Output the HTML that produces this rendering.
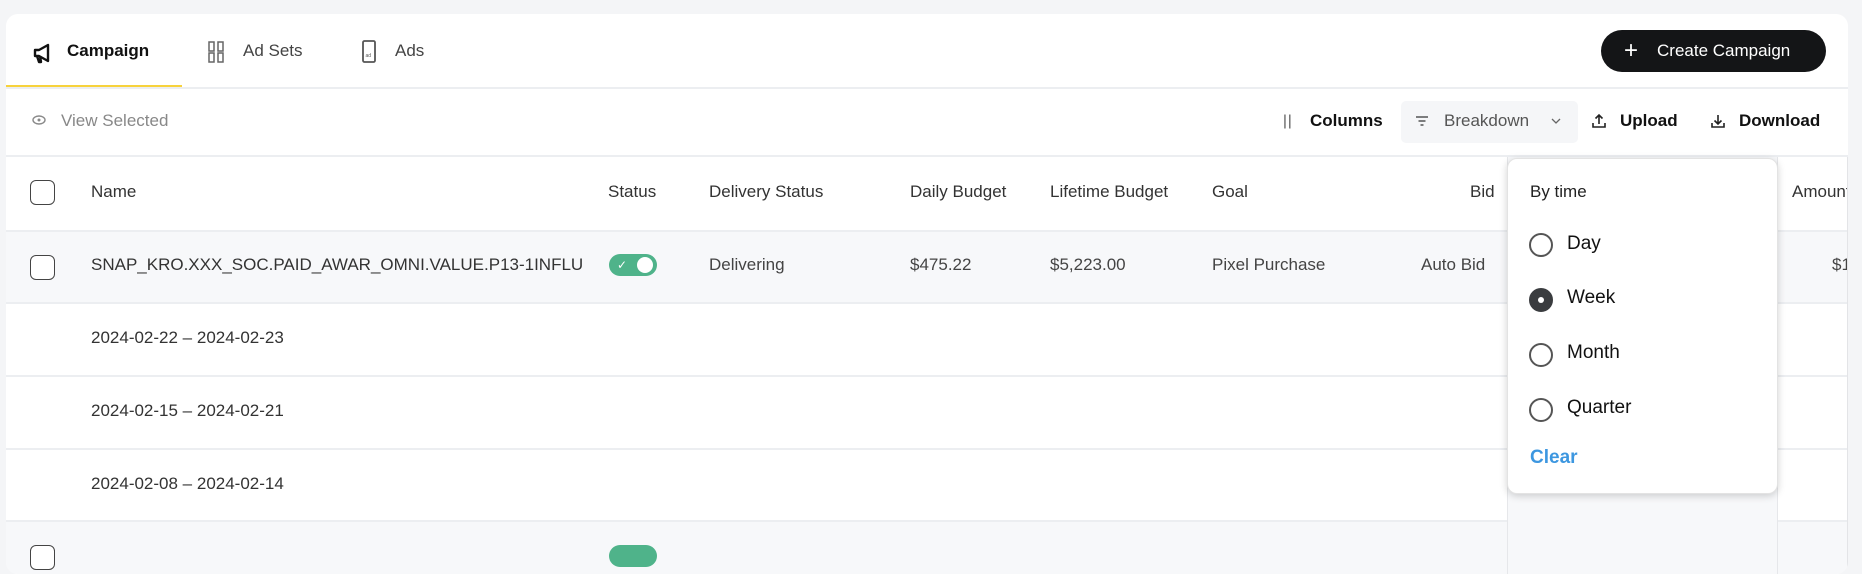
<!DOCTYPE html>
<html><head><style>
*{box-sizing:border-box;margin:0;padding:0}
body{width:1862px;height:550px;background:#f4f5f7;font-family:"Liberation Sans",sans-serif;color:#222;overflow:hidden;position:relative}
.card{position:absolute;left:6px;top:14px;width:1842px;height:560px;background:#fff;border-radius:12px;overflow:hidden}
.abs{position:absolute}
.t{position:absolute;transform:translateY(-50%);white-space:nowrap;font-size:17px}
.hl{position:absolute;left:0;right:0;height:2px;background:#eceef1}
.cb{position:absolute;width:25px;height:25px;border:1.6px solid #444;border-radius:6px;background:#fff}
.radio{position:absolute;width:24px;height:24px;border:2px solid #555;border-radius:50%}
</style></head><body>
<div class="card">
 <svg class="abs" style="left:26px;top:28px" width="22" height="22" viewBox="0 0 22 22"><path d="M3 8h4l9-5v16l-9-5H3z M5 14l2 6h2l-1-6" fill="none" stroke="#111" stroke-width="2.4" stroke-linejoin="round"/></svg>
 <div class="t" style="left:61px;top:37px;font-weight:600;color:#111">Campaign</div>
 <svg class="abs" style="left:202px;top:27px" width="16" height="22" viewBox="0 0 16 22"><g fill="none" stroke="#666" stroke-width="1.5"><rect x="1" y="1" width="5" height="9"/><rect x="10" y="1" width="5" height="9"/><rect x="1" y="12" width="5" height="9"/><rect x="10" y="12" width="5" height="9"/></g></svg>
 <div class="t" style="left:237px;top:37px;color:#444">Ad Sets</div>
 <svg class="abs" style="left:356px;top:26px" width="14" height="23" viewBox="0 0 14 23"><rect x="1" y="1" width="12" height="21" rx="1.5" fill="none" stroke="#555" stroke-width="1.8"/><text x="3.5" y="17" font-size="5" fill="#555" font-family="Liberation Sans">ad</text></svg>
 <div class="t" style="left:389px;top:37px;color:#444">Ads</div>
 <div class="abs" style="left:0;top:71px;width:176px;height:3px;background:#f7d23c"></div>
 <div class="hl" style="top:73px"></div>
 <div class="abs" style="left:1595px;top:16px;width:225px;height:42px;border-radius:21px;background:#141517"></div>
 <div class="t" style="left:1618px;top:37px;color:#fff;font-size:24px;font-weight:300">+</div>
 <div class="t" style="left:1651px;top:37px;color:#fff;font-weight:500">Create Campaign</div>
 <svg class="abs" style="left:26px;top:101px" width="14" height="10" viewBox="0 0 14 10"><ellipse cx="7" cy="5" rx="6" ry="4" fill="none" stroke="#888" stroke-width="1.4"/><circle cx="7" cy="5" r="1.5" fill="#888"/></svg>
 <div class="t" style="left:55px;top:107px;color:#888">View Selected</div>
 <div class="t" style="left:1277px;top:107px;color:#555;font-size:15px;letter-spacing:1px">||</div>
 <div class="t" style="left:1304px;top:107px;font-weight:600;color:#111">Columns</div>
 <div class="abs" style="left:1395px;top:87px;width:177px;height:42px;background:#f5f6f8;border-radius:5px"></div>
 <svg class="abs" style="left:1409px;top:101px" width="14" height="12" viewBox="0 0 14 12"><path d="M1 2h12M3.5 6h7M5.5 10h3" stroke="#555" stroke-width="1.5"/></svg>
 <div class="t" style="left:1438px;top:107px;color:#555">Breakdown</div>
 <svg class="abs" style="left:1545px;top:104px" width="10" height="6" viewBox="0 0 10 6"><path d="M1 1l4 4 4-4" fill="none" stroke="#666" stroke-width="1.3"/></svg>
 <svg class="abs" style="left:1585px;top:99px" width="16" height="16" viewBox="0 0 16 16"><path d="M8 11V2M4.5 5.5L8 2l3.5 3.5M2 10v4h12v-4" fill="none" stroke="#222" stroke-width="1.6"/></svg>
 <div class="t" style="left:1614px;top:107px;font-weight:600;color:#111">Upload</div>
 <svg class="abs" style="left:1704px;top:99px" width="16" height="16" viewBox="0 0 16 16"><path d="M8 2v9M4.5 7.5L8 11l3.5-3.5M2 10v4h12v-4" fill="none" stroke="#222" stroke-width="1.6"/></svg>
 <div class="t" style="left:1733px;top:107px;font-weight:600;color:#111">Download</div>
 <div class="hl" style="top:141px"></div>
 <div class="cb" style="left:24px;top:166px"></div>
 <div class="t" style="left:85px;top:178px;color:#333">Name</div>
 <div class="t" style="left:602px;top:178px;color:#333">Status</div>
 <div class="t" style="left:703px;top:178px;color:#333">Delivery Status</div>
 <div class="t" style="left:904px;top:178px;color:#333">Daily Budget</div>
 <div class="t" style="left:1044px;top:178px;color:#333">Lifetime Budget</div>
 <div class="t" style="left:1206px;top:178px;color:#333">Goal</div>
 <div class="t" style="left:1464px;top:178px;color:#333">Bid</div>
 <div class="t" style="left:1786px;top:178px;color:#333">Amount</div>
 <div class="hl" style="top:216px"></div>
 <div class="abs" style="left:0;top:218px;width:1842px;height:71px;background:#f7f8fa"></div>
 <div class="cb" style="left:24px;top:241px"></div>
 <div class="t" style="left:85px;top:251px;color:#333">SNAP_KRO.XXX_SOC.PAID_AWAR_OMNI.VALUE.P13-1INFLU</div>
 <div class="abs" style="left:603px;top:240px;width:48px;height:22px;border-radius:11px;background:#4fb38a"></div>
 <div class="abs" style="left:631px;top:243px;width:16px;height:16px;border-radius:50%;background:#fff"></div>
 <div class="t" style="left:611px;top:251px;color:#fff;font-size:12px">✓</div>
 <div class="t" style="left:703px;top:251px;color:#444">Delivering</div>
 <div class="t" style="left:904px;top:251px;color:#444">$475.22</div>
 <div class="t" style="left:1044px;top:251px;color:#444">$5,223.00</div>
 <div class="t" style="left:1206px;top:251px;color:#444">Pixel Purchase</div>
 <div class="t" style="left:1415px;top:251px;color:#444">Auto Bid</div>
 <div class="t" style="left:1826px;top:251px;color:#444">$1,</div>
 <div class="hl" style="top:288px"></div>
 <div class="t" style="left:85px;top:324px;color:#333">2024-02-22 – 2024-02-23</div>
 <div class="hl" style="top:361px"></div>
 <div class="t" style="left:85px;top:397px;color:#333">2024-02-15 – 2024-02-21</div>
 <div class="hl" style="top:434px"></div>
 <div class="t" style="left:85px;top:470px;color:#333">2024-02-08 – 2024-02-14</div>
 <div class="hl" style="top:506px"></div>
 <div class="abs" style="left:0;top:508px;width:1842px;height:60px;background:#f7f8fa"></div>
 <div class="cb" style="left:24px;top:531px"></div>
 <div class="abs" style="left:603px;top:531px;width:48px;height:22px;border-radius:11px;background:#4fb38a"></div>
 <div class="abs" style="left:1501px;top:143px;width:271px;height:420px;background:#f7f8fa;border-left:1px solid #e6e7ea;border-right:1px solid #e6e7ea"></div>
 <div class="abs" style="left:1841px;top:143px;width:1px;height:420px;background:#e3e4e7"></div>
 <div class="abs" style="left:1501px;top:144px;width:271px;height:336px;background:#fff;border-radius:10px;box-shadow:0 2px 8px rgba(0,0,0,.18);border:1px solid #e3e3e3"></div>
 <div class="t" style="left:1524px;top:178px;color:#222">By time</div>
 <div class="radio" style="left:1523px;top:219px"></div>
 <div class="t" style="left:1561px;top:230px;font-size:19px;color:#111">Day</div>
 <div class="radio" style="left:1523px;top:274px;background:#3a3c3f;border-color:#3a3c3f"></div>
 <div class="abs" style="left:1532px;top:283px;width:6px;height:6px;border-radius:50%;background:#fff"></div>
 <div class="t" style="left:1561px;top:284px;font-size:19px;color:#111">Week</div>
 <div class="radio" style="left:1523px;top:329px"></div>
 <div class="t" style="left:1561px;top:339px;font-size:19px;color:#111">Month</div>
 <div class="radio" style="left:1523px;top:384px"></div>
 <div class="t" style="left:1561px;top:394px;font-size:19px;color:#111">Quarter</div>
 <div class="t" style="left:1524px;top:444px;font-size:19px;font-weight:600;color:#3d97e0">Clear</div>
</div>
</body></html>
